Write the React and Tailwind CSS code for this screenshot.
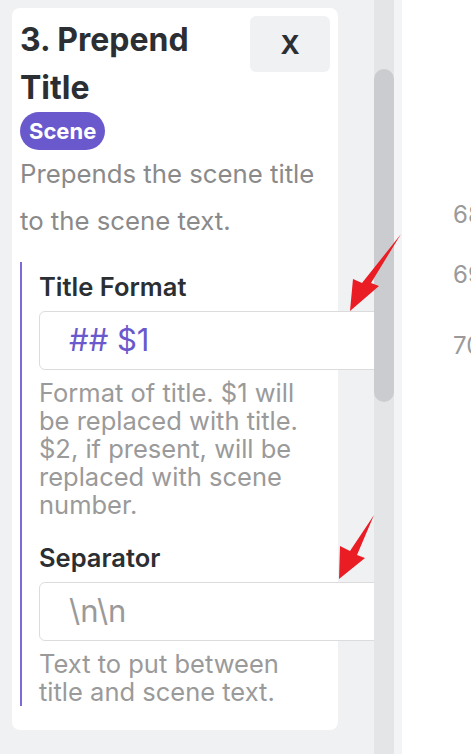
const Field = ({ label, value, valueClass, help }) => (
  <div>
    <div className="text-[25.5px] leading-8 font-semibold text-[#2b2f33]">{label}</div>
    <div className="mt-2 w-[345px] h-[59px] border border-[#dcdcdc] rounded-md bg-white flex items-center pl-[29px]">
      <span className={`text-[31px] ${valueClass}`}>{value}</span>
    </div>
    <p className="mt-[9px] w-[272px] text-[25.5px] leading-7 text-[#9a9a9a]">{help}</p>
  </div>
);

export default function App() {
  return (
    <div className="relative h-[754px] w-[471px] flex bg-[#f0f1f3] overflow-hidden font-['Inter','Liberation_Sans',sans-serif]">
      <div className="w-[374px] shrink-0 overflow-hidden pl-3 pt-2">
        <div className="w-[326px] bg-white rounded-lg pl-2 pr-2 pt-2 pb-6">
          <div className="flex justify-between items-start">
            <h1 className="w-[220px] text-[32px] leading-[48px] font-bold text-[#2b2f33]">
              3. Prepend Title
            </h1>
            <button className="w-20 h-14 rounded-md bg-[#f0f1f3] text-[26px] font-bold text-[#2b2f33]">
              X
            </button>
          </div>
          <div className="inline-flex items-center h-[38px] px-[9px] rounded-full bg-[#6a59cc] text-white text-[22px] font-bold">
            Scene
          </div>
          <p className="text-[25.75px] leading-[47px] text-[#8a8a8a]">
            Prepends the scene title to the scene text.
          </p>
          <div className="mt-[18px] border-l-2 border-[#7b6ad8] pl-[17px] pt-[9px] flex flex-col gap-[23px]">
            <Field
              label="Title Format"
              value="## $1"
              valueClass="text-[#6a59cc]"
              help="Format of title. $1 will be replaced with title. $2, if present, will be replaced with scene number."
            />
            <Field
              label="Separator"
              value="\n\n"
              valueClass="text-[#9a9a9a]"
              help="Text to put between title and scene text."
            />
          </div>
        </div>
      </div>
      <div className="w-5 shrink-0 bg-[#e4e5e7] pt-[69px]">
        <div className="h-[333px] rounded-full bg-[#cbcccf]" />
      </div>
      <div className="w-2 shrink-0 bg-[#f3f4f6]" />
      <div className="flex-1 bg-white pl-[51px] pt-[199px] text-[24px] text-[#9a9a9a] whitespace-nowrap">
        <div className="leading-8">68</div>
        <div className="mt-7 leading-8">69</div>
        <div className="mt-[39px] leading-8">70</div>
      </div>
      <svg className="absolute inset-0 pointer-events-none" width="471" height="754" viewBox="0 0 471 754">
        <polygon points="401,234 371,283 379,286 350,311 353,279 362,283" fill="#ea1c24" />
        <polygon points="374,515 357,555 365,558 339,579 340,546 350,551" fill="#ea1c24" />
      </svg>
    </div>
  );
}
